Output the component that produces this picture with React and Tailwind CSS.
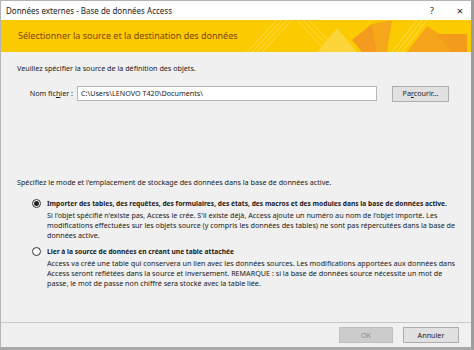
import { useState } from "react";

const Banner = () => (
  <div className="h-[32px] shrink-0 bg-[#fcca00] flex items-center pl-[17px] overflow-hidden">
    <span className="text-[9px] text-[#804400] whitespace-nowrap">
      Sélectionner la source et la destination des données
    </span>
    <svg className="ml-auto shrink-0" width="230" height="32" viewBox="244 0 230 32">
      <g stroke="#ffe066" strokeWidth="1" opacity="0.8">
        <line x1="250" y1="32" x2="280" y2="0" />
        <line x1="255" y1="32" x2="285" y2="0" />
        <line x1="260" y1="32" x2="290" y2="0" />
        <line x1="265" y1="32" x2="295" y2="0" />
        <line x1="300" y1="0" x2="330" y2="32" />
        <line x1="306" y1="0" x2="336" y2="32" />
        <line x1="312" y1="0" x2="342" y2="32" />
        <line x1="395" y1="32" x2="420" y2="0" />
        <line x1="400" y1="32" x2="425" y2="0" />
        <line x1="405" y1="32" x2="430" y2="0" />
      </g>
      <polygon points="320,32 340,8 360,32" fill="#fbd53a" />
      <polygon points="355,20 375,4 380,32 365,32" fill="#f39a1f" />
      <polygon points="375,4 395,0 390,32 380,32" fill="#f5a81c" />
      <polygon points="410,32 430,6 470,32" fill="#f6a41a" />
      <polygon points="440,14 470,14 470,32 455,32" fill="#f39b1a" />
    </svg>
  </div>
);

const Radio = ({ checked }) => (
  <span className="mt-[1px] w-[9px] h-[9px] rounded-full border border-[#333] bg-white flex items-center justify-center shrink-0">
    {checked && <span className="w-[5px] h-[5px] rounded-full bg-[#222]" />}
  </span>
);

const options = [
  {
    label: "Importer des tables, des requêtes, des formulaires, des états, des macros et des modules dans la base de données active.",
    desc: [
      "Si l'objet spécifié n'existe pas, Access le crée. S'il existe déjà, Access ajoute un numéro au nom de l'objet importé. Les",
      "modifications effectuées sur les objets source (y compris les données des tables) ne sont pas répercutées dans la base de",
      "données active.",
    ],
  },
  {
    label: "Lier à la source de données en créant une table attachée",
    desc: [
      "Access va créé une table qui conservera un lien avec les données sources. Les modifications apportées aux données dans",
      "Access seront reflétées dans la source et inversement. REMARQUE : si la base de données source nécessite un mot de",
      "passe, le mot de passe non chiffré sera stocké avec la table liée.",
    ],
  },
];

export default function App() {
  const [choice, setChoice] = useState(0);

  return (
    <div className="w-[474px] h-[350px] bg-[#f0f0f0] border-t border-l border-[#b4b4b4] border-r-[3px] border-r-[#9c9c9c] border-b-[3px] border-b-[#a8a8a8] flex flex-col font-['Noto_Sans',sans-serif] text-[#1a1a1a] overflow-hidden">
      {/* title bar */}
      <div className="h-[19px] shrink-0 bg-white flex items-center pl-[5px] pr-[1px] text-[8px]">
        <span className="flex-1">Données externes - Base de données Access</span>
        <span className="w-[20px] text-center text-[9px]">?</span>
        <span className="w-[20px] ml-[8px] text-center text-[11px] leading-none">×</span>
      </div>

      <Banner />

      <div className="flex-1 min-h-0 overflow-hidden flex flex-col px-[16px] text-[7.2px] whitespace-nowrap">
        <p className="mt-[11px]">Veuillez spécifier la source de la définition des objets.</p>

        <div className="mt-[12px] flex items-center">
          <span className="w-[60px] text-right pr-[4px]">
            Nom fic<span className="underline">h</span>ier :
          </span>
          <div className="w-[300px] h-[15px] bg-white border border-[#b8b8b8] flex items-center px-[3px]">
            C:\Users\LENOVO T420\Documents\
          </div>
          <button className="ml-[15px] w-[57px] h-[16px] bg-[#e1e1e1] border border-[#adadad] text-[7.2px]">
            Pa<span className="underline">r</span>courir...
          </button>
        </div>

        <p className="mt-[75px]">
          Spécifiez le mode et l'emplacement de stockage des données dans la base de données active.
        </p>

        <div className="mt-[10px] flex flex-col gap-[6px] pl-[15px]">
          {options.map((o, i) => (
            <div key={i} className="flex gap-[6px] cursor-pointer" onClick={() => setChoice(i)}>
              <Radio checked={choice === i} />
              <div className="flex flex-col">
                <span className="font-bold text-[6.65px] leading-[11px]">{o.label}</span>
                <div className="mt-[1px] leading-[10px]">
                  {o.desc.map((l) => (
                    <div key={l}>{l}</div>
                  ))}
                </div>
              </div>
            </div>
          ))}
        </div>
      </div>

      <div className="h-[25px] border-t border-[#c8c8c8] flex items-center justify-end gap-[10px] pr-[12px] shrink-0">
        <button className="w-[54px] h-[16px] bg-[#cccccc] border border-[#bfbfbf] text-[#8a8a8a] text-[7.2px]" disabled>
          OK
        </button>
        <button className="w-[56px] h-[16px] bg-[#e1e1e1] border border-[#adadad] text-[7.2px]">
          Annuler
        </button>
      </div>
    </div>
  );
}
